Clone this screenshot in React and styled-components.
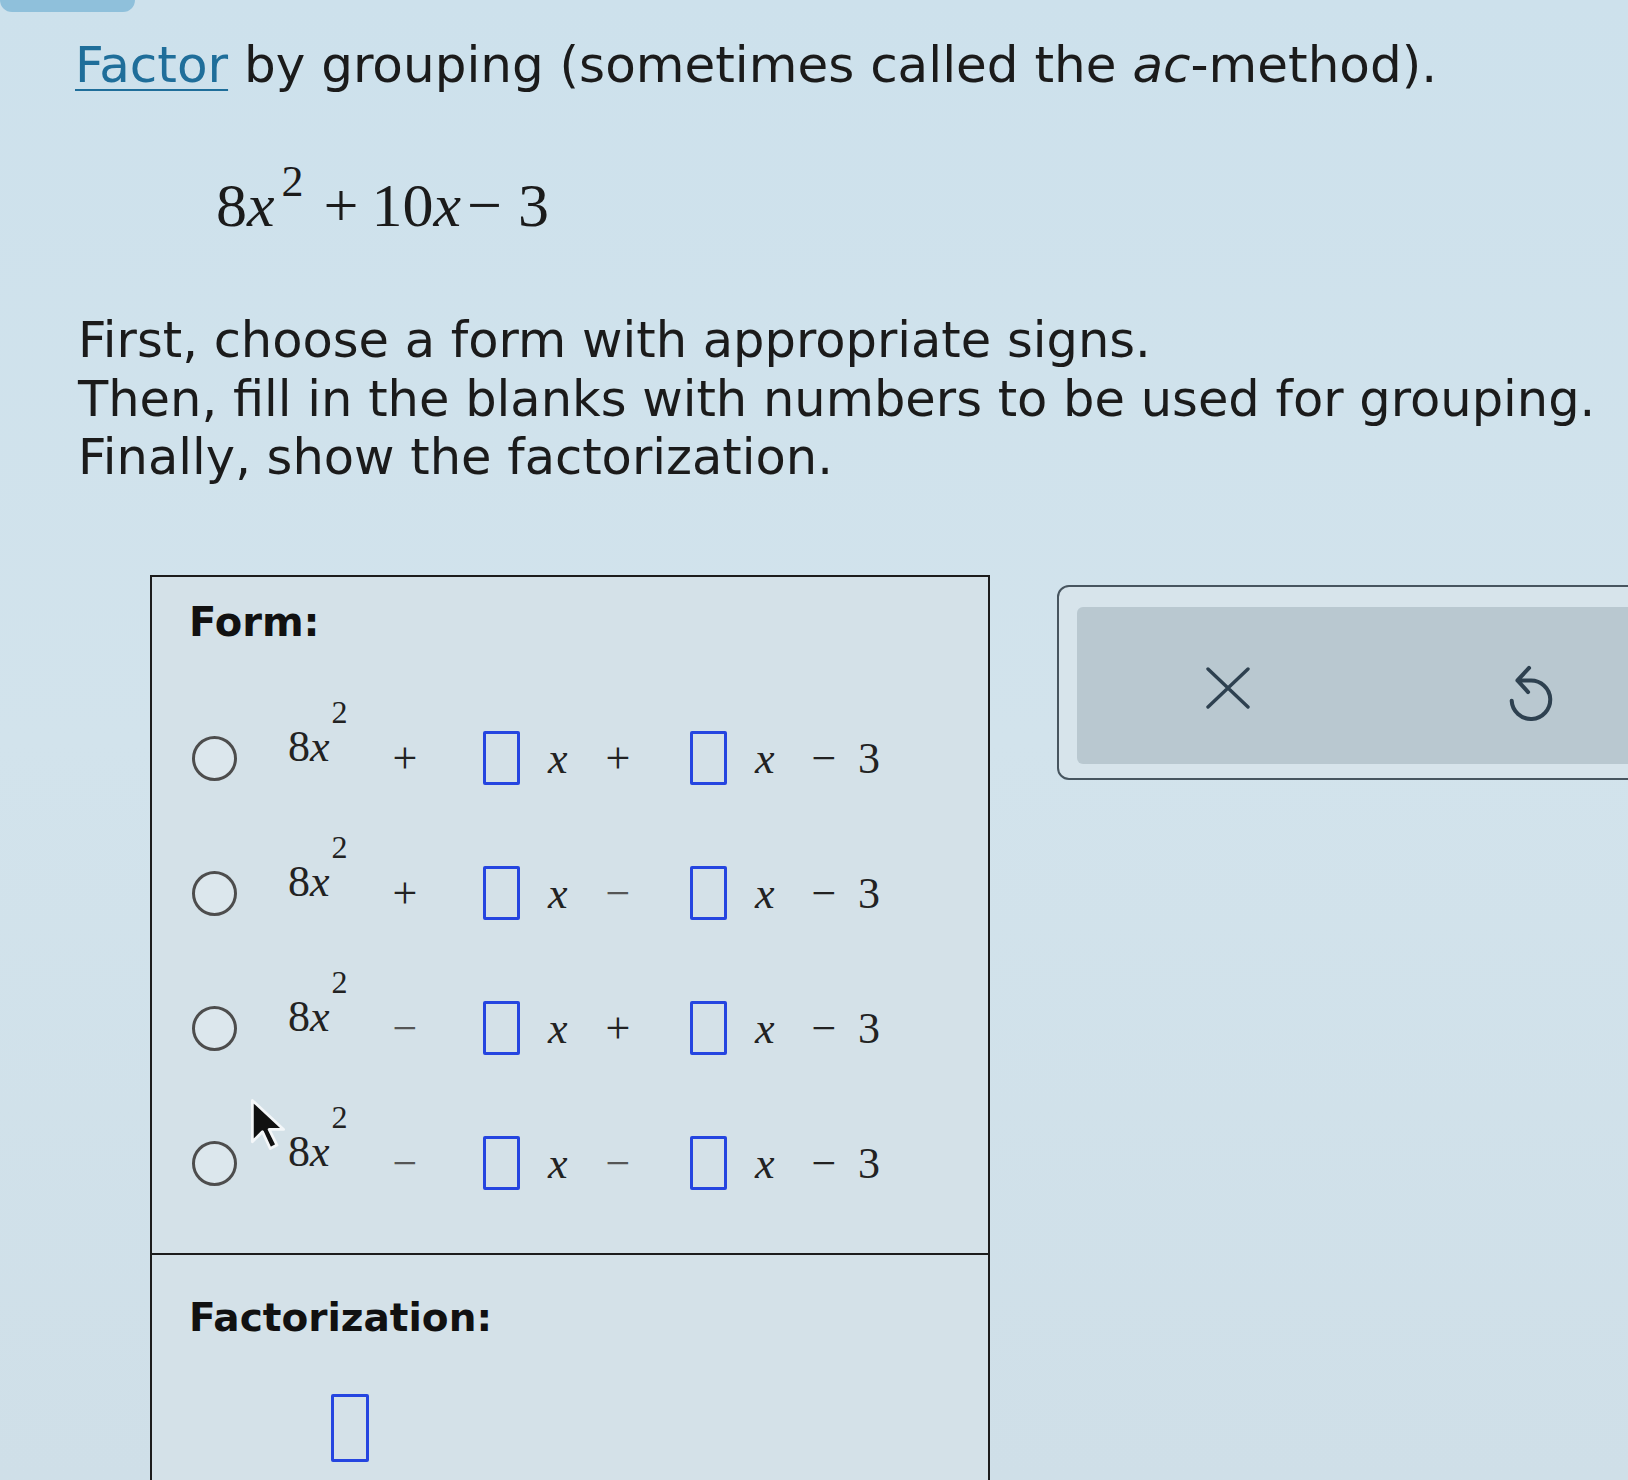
import React from "react";
import styled, { createGlobalStyle } from "styled-components";

const GlobalStyle = createGlobalStyle`
  html, body { margin: 0; padding: 0; }
  body {
    background: #cfe1eb;
    font-family: "DejaVu Sans", Verdana, sans-serif;
    color: #1b1b1b;
    overflow: hidden;
  }
`;

const Page = styled.div`
  position: relative;
  width: 1628px;
  height: 1480px;
  overflow: hidden;
  background: linear-gradient(180deg, #cde1ec 0%, #d2e3ec 50%, #cfdfe8 100%);
`;

const Tab = styled.div`
  width: 135px;
  height: 12px;
  background: #8fc0db;
  border-radius: 0 0 16px 16px;
`;

const Title = styled.h1`
  margin: 23px 0 0 75px;
  font-size: 50px;
  line-height: 60px;
  font-weight: normal;
  white-space: nowrap;
`;

const Link = styled.span`
  color: #1f6e9a;
  text-decoration: underline;
  text-decoration-thickness: 2px;
  text-underline-offset: 7px;
`;

const Em = styled.span`
  font-style: italic;
`;

const Expression = styled.div`
  margin: 70px 0 0 216px;
  font-family: "Liberation Serif", "Times New Roman", serif;
  font-size: 62px;
  line-height: 80px;
  white-space: nowrap;
`;

const MathVar = styled.span`
  font-style: italic;
`;

const ExpSup = styled.span`
  display: inline-block;
  font-size: 44px;
  transform: translateY(-30px);
  margin-left: 7px;
`;

const ExpOp = styled.span`
  margin: 0 ${(p) => p.$right}px 0 ${(p) => p.$left}px;
`;

const Instructions = styled.div`
  margin: 59px 0 0 78px;
  font-size: 49.5px;
  line-height: 58.5px;
  white-space: nowrap;
`;

const Main = styled.div`
  display: flex;
  align-items: flex-start;
  margin: 88px 0 0 150px;
`;

const Box = styled.div`
  width: 840px;
  flex: none;
  box-sizing: border-box;
  border: 2px solid #1c1c1c;
  border-bottom: none;
  background: #d4e1e8;
`;

const FormSection = styled.div`
  padding: 21px 0 22px 40px;
`;

const SectionLabel = styled.div`
  margin-left: -3px;
  font-weight: bold;
  font-size: ${(p) => p.$size}px;
  line-height: 48px;
  color: #111;
`;

const Rows = styled.div`
  margin-top: 45px;
`;

const Row = styled.div`
  display: grid;
  grid-template-columns: 45px 133px 70px 80px 60px 76px 71px 63px 68px auto;
  align-items: center;
  height: 135px;
  font-family: "Liberation Serif", "Times New Roman", serif;
  font-size: 44px;
  color: #222;
`;

const Radio = styled.div`
  width: 45px;
  height: 45px;
  box-sizing: border-box;
  border: 3px solid #4d4d4d;
  border-radius: 50%;
  background: #dce7ed;
`;

const Term = styled.div`
  padding-left: 51px;
  position: relative;
  top: -12px;
  white-space: nowrap;
`;

const TermSup = styled.span`
  display: inline-block;
  font-size: 32px;
  margin-left: 2px;
  transform: translateY(-38px);
`;

const Op = styled.div`
  text-align: center;
  color: ${(p) => (p.$light ? "#555" : "#222")};
`;

const Blank = styled.div`
  justify-self: ${(p) => (p.$end ? "end" : "start")};
  width: ${(p) => p.$w || 37}px;
  height: ${(p) => p.$h || 54}px;
  box-sizing: border-box;
  border: 3px solid #2545e0;
  border-radius: 2px;
`;

const Var = styled.div`
  padding-left: 28px;
  font-style: italic;
`;

const Const = styled.div``;

const FactorSection = styled.div`
  border-top: 2px solid #1c1c1c;
  padding: 39px 0 80px 40px;
`;

const FactorBlank = styled(Blank)`
  margin: 52px 0 0 139px;
`;

const Panel = styled.div`
  flex: none;
  margin: 10px 0 0 67px;
  width: 700px;
  height: 195px;
  box-sizing: border-box;
  border: 2px solid #47555f;
  border-radius: 12px;
  background: #d7e4eb;
  padding: 20px 0 14px 18px;
`;

const PanelInner = styled.div`
  display: grid;
  grid-template-columns: 302px 302px;
  height: 100%;
  background: #b9c8d0;
  border-radius: 6px 0 0 6px;
`;

const IconButton = styled.div`
  display: flex;
  align-items: center;
  justify-content: center;
  padding-top: ${(p) => p.$dy || 0}px;
`;

const Cursor = styled.svg`
  position: absolute;
  left: 249px;
  top: 1097px;
`;

const forms = [
  ["+", "+"],
  ["+", "−"],
  ["−", "+"],
  ["−", "−"],
];

function FormRow({ s1, s2 }) {
  return (
    <Row>
      <Radio />
      <Term>
        8<MathVar>x</MathVar>
        <TermSup>2</TermSup>
      </Term>
      <Op $light={s1 === "−"}>{s1}</Op>
      <Blank $end />
      <Var>x</Var>
      <Op $light={s2 === "−"}>{s2}</Op>
      <Blank $end />
      <Var>x</Var>
      <Op>−</Op>
      <Const>3</Const>
    </Row>
  );
}

export default function App() {
  return (
    <Page>
      <GlobalStyle />
      <Tab />
      <Title>
        <Link>Factor</Link> by grouping (sometimes called the <Em>ac</Em>-method).
      </Title>
      <Expression>
        8<MathVar>x</MathVar>
        <ExpSup>2</ExpSup>
        <ExpOp $left={20} $right={13}>+</ExpOp>10<MathVar>x</MathVar>
        <ExpOp $left={6} $right={16}>−</ExpOp>3
      </Expression>
      <Instructions>
        First, choose a form with appropriate signs.
        <br />
        Then, fill in the blanks with numbers to be used for grouping.
        <br />
        Finally, show the factorization.
      </Instructions>
      <Main>
        <Box>
          <FormSection>
            <SectionLabel $size={40}>Form:</SectionLabel>
            <Rows>
              {forms.map(([a, b], i) => (
                <FormRow key={i} s1={a} s2={b} />
              ))}
            </Rows>
          </FormSection>
          <FactorSection>
            <SectionLabel $size={39}>Factorization:</SectionLabel>
            <FactorBlank $w={38} $h={68} />
          </FactorSection>
        </Box>
        <Panel>
          <PanelInner>
            <IconButton $dy={6}>
              <svg width="46" height="42" viewBox="0 0 46 42">
                <path d="M3 2 L43 40 M43 2 L3 40" stroke="#2e4150" strokeWidth="3.4" strokeLinecap="round" fill="none" />
              </svg>
            </IconButton>
            <IconButton $dy={16}>
              <svg width="54" height="64" viewBox="22 20 56 64">
                <path d="M31 60 A20 20 0 1 0 50 39 L37 39 M49 26 L37 39 L48 51" stroke="#2e4150" strokeWidth="4.2" strokeLinecap="round" strokeLinejoin="round" fill="none" />
              </svg>
            </IconButton>
          </PanelInner>
        </Panel>
      </Main>
      <Cursor width="38" height="56" viewBox="0 0 34 50">
        <path d="M3 3 L3 40 L12 31 L19 46 L25 43 L18 29 L31 29 Z" fill="#111" stroke="#f4f7f9" strokeWidth="2.5" strokeLinejoin="round" />
      </Cursor>
    </Page>
  );
}
